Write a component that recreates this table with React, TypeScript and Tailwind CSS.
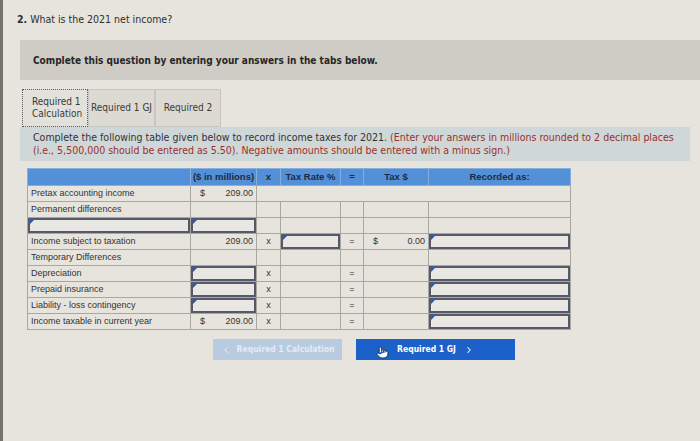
import { ChevronLeft, ChevronRight, Pointer } from 'lucide-react';

const bodyFont = "font-['DejaVu_Sans_Condensed','DejaVu_Sans',sans-serif]";
const tableFont = "font-['Liberation_Sans',Arial,sans-serif]";

function Flag() {
  return (
    <span className="absolute left-0 top-0 h-0 w-0 border-l-[4px] border-b-[4px] border-l-[#2a56b8] border-b-transparent" />
  );
}

function Td({
  children,
  input,
  className = '',
  colSpan,
}: {
  children?: React.ReactNode;
  input?: boolean;
  className?: string;
  colSpan?: number;
}) {
  return (
    <td colSpan={colSpan} className={`relative border border-[#a9a7a1] p-0 align-middle ${className}`}>
      {input ? (
        <div className="relative h-[15px] border-2 border-[#55596a] bg-[#e9e7e1]">
          <Flag />
        </div>
      ) : (
        <div className="flex h-[15px] items-center px-[3px]">{children}</div>
      )}
    </td>
  );
}

function Money({ value, dollar }: { value: string; dollar?: boolean }) {
  return (
    <div className="flex w-full items-center justify-between pl-[6px]">
      <span>{dollar ? '$' : ''}</span>
      <span>{value}</span>
    </div>
  );
}

function X() {
  return <div className="w-full text-center">x</div>;
}

function Eq() {
  return <div className="w-full text-center">=</div>;
}

export default function App() {
  return (
    <div className={`relative h-[441px] w-[700px] overflow-hidden border-l-[3px] border-[#75726c] bg-[#e7e4dd] text-[#2e2e2e] ${bodyFont}`}>
      <div className="pl-[14px] pt-[12px] text-[10.5px] leading-[15px]">
        <span className="font-bold">2.</span> What is the 2021 net income?
      </div>

      <div className="ml-[17px] mt-[13px] flex h-[40px] items-center bg-[#cfccc5] pl-[13px] text-[10px] font-bold text-[#262626]">
        Complete this question by entering your answers in the tabs below.
      </div>

      <div className="ml-[19px] mt-[9px] flex h-[38px] text-[10px] leading-[12px] text-[#3a3a3a]">
        <div className="flex w-[66px] items-center border border-dotted border-[#5a5a5a] bg-[#e3e1db] pl-[9px]">
          Required 1<br />Calculation
        </div>
        <div className="flex w-[67px] items-center justify-center border border-[#c8c6c0] bg-[#dddad3]">
          Required 1 GJ
        </div>
        <div className="flex w-[66px] items-center justify-center border border-[#c8c6c0] bg-[#dddad3]">
          Required 2
        </div>
      </div>

      <div className="ml-[17px] w-[670px] bg-[#d0d7d8] px-[13px] py-[4px] text-[10.5px] leading-[13px] text-[#333]">
        Complete the following table given below to record income taxes for 2021.{' '}
        <span className="text-[#9b3029]">
          (Enter your answers in millions rounded to 2 decimal places (i.e., 5,500,000 should be entered as 5.50). Negative amounts should be entered with a minus sign.)
        </span>
      </div>

      <table className={`ml-[24px] mt-[7px] border-collapse text-[9px] text-[#333] ${tableFont}`}>
        <colgroup>
          <col className="w-[163px]" />
          <col className="w-[66px]" />
          <col className="w-[24px]" />
          <col className="w-[60px]" />
          <col className="w-[23px]" />
          <col className="w-[65px]" />
          <col className="w-[142px]" />
        </colgroup>
        <thead>
          <tr className="h-[17px] bg-[#5490d7] text-[9.5px] text-[#1b2a45]">
            <th className="border border-[#86aee0] font-bold" />
            <th className="border border-[#86aee0] font-bold">($ in millions)</th>
            <th className="border border-[#86aee0] font-bold">x</th>
            <th className="border border-[#86aee0] font-bold">Tax Rate %</th>
            <th className="border border-[#86aee0] font-bold">=</th>
            <th className="border border-[#86aee0] font-bold">Tax $</th>
            <th className="border border-[#86aee0] font-bold">Recorded as:</th>
          </tr>
        </thead>
        <tbody>
          <tr>
            <Td>Pretax accounting income</Td>
            <Td>
              <Money dollar value="209.00" />
            </Td>
            <Td colSpan={5} />
          </tr>
          <tr>
            <Td>Permanent differences</Td>
            <Td />
            <Td />
            <Td />
            <Td />
            <Td />
            <Td />
          </tr>
          <tr>
            <Td input />
            <Td input />
            <Td />
            <Td />
            <Td />
            <Td />
            <Td />
          </tr>
          <tr>
            <Td>Income subject to taxation</Td>
            <Td>
              <Money value="209.00" />
            </Td>
            <Td>
              <X />
            </Td>
            <Td input />
            <Td>
              <Eq />
            </Td>
            <Td>
              <Money dollar value="0.00" />
            </Td>
            <Td input />
          </tr>
          <tr>
            <Td>Temporary Differences</Td>
            <Td />
            <Td />
            <Td />
            <Td />
            <Td />
            <Td />
          </tr>
          {['Depreciation', 'Prepaid insurance', 'Liability - loss contingency'].map((label) => (
            <tr key={label}>
              <Td>{label}</Td>
              <Td input />
              <Td>
                <X />
              </Td>
              <Td />
              <Td>
                <Eq />
              </Td>
              <Td />
              <Td input />
            </tr>
          ))}
          <tr>
            <Td>Income taxable in current year</Td>
            <Td>
              <Money dollar value="209.00" />
            </Td>
            <Td>
              <X />
            </Td>
            <Td />
            <Td>
              <Eq />
            </Td>
            <Td />
            <Td input />
          </tr>
        </tbody>
      </table>

      <div className={`ml-[210px] mt-[9px] flex gap-[14px] text-[8.5px] font-bold ${bodyFont}`}>
        <div className="flex h-[21px] w-[129px] items-center justify-center gap-[6px] bg-[#b9cbe0] text-[#e4ecf5]">
          <ChevronLeft size={10} strokeWidth={2.5} />
          Required 1 Calculation
        </div>
        <div className="relative flex h-[21px] w-[159px] items-center justify-center gap-[8px] bg-[#1c61c9] text-white">
          Required 1 GJ
          <ChevronRight size={10} strokeWidth={2.5} />
          <Pointer
            size={13}
            strokeWidth={1.5}
            className="absolute left-[20px] top-[7px] fill-white text-[#222]"
          />
        </div>
      </div>
    </div>
  );
}
